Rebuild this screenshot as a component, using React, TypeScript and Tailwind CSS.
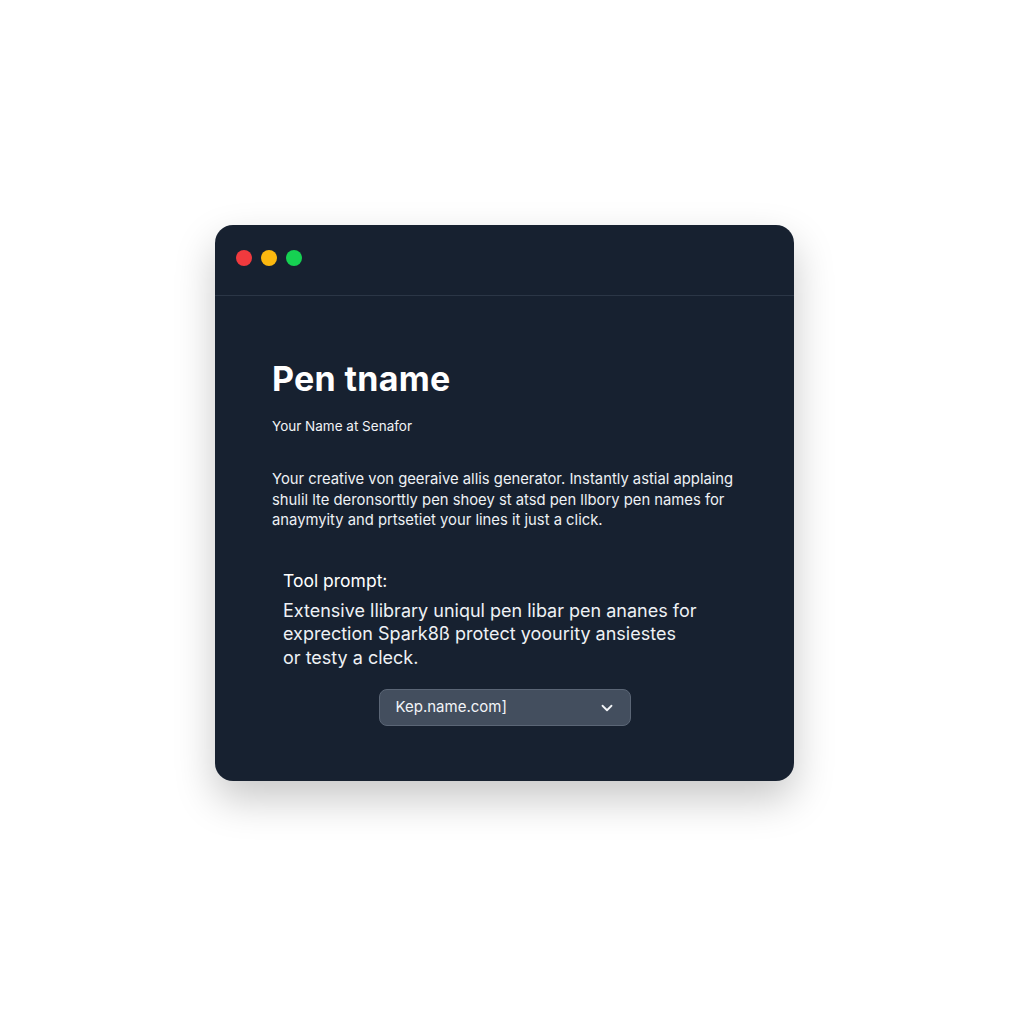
import React from "react";

const dots = ["bg-[#f03a3e]", "bg-[#fbb80f]", "bg-[#16d152]"];

export default function App() {
  return (
    <div
      className="h-[1024px] w-[1024px] bg-white pt-[225px] pl-[215px]"
      style={{ fontFamily: "Inter, 'Noto Sans', sans-serif" }}
    >
      <div className="w-[579px] h-[556px] rounded-[18px] bg-[#172130] shadow-[0_18px_40px_rgba(0,0,0,0.22)] flex flex-col overflow-hidden">
        {/* title bar */}
        <div className="h-[71px] border-b border-[#2b3646] flex gap-[9px] pt-[25px] pl-[21px]">
          {dots.map((c) => (
            <span key={c} className={`w-[16px] h-[16px] rounded-full ${c}`} />
          ))}
        </div>

        {/* body */}
        <div className="flex flex-col pl-[57px] pt-[63px] text-white">
          <h1 className="text-[34px] leading-[40px] font-bold tracking-[0.3px]">Pen tname</h1>
          <p className="mt-[17px] text-[13.5px] leading-[20px] text-[#f1f3f6]">Your Name at Senafor</p>
          <p className="mt-[33px] text-[14.8px] leading-[20.5px] text-[#eef1f5]">
            Your creative von geeraive allis generator. Instantly astial applaing
            <br />
            shulil lte deronsorttly pen shoey st atsd pen llbory pen names for
            <br />
            anaymyity and prtsetiet your lines it just a click.
          </p>

          <div className="pl-[11px] mt-[38px]">
            <p className="text-[17.5px] leading-[24px]">Tool prompt:</p>
            <p className="mt-[6px] text-[18px] leading-[23.5px] text-[#eef1f5]">
              Extensive llibrary uniqul pen libar pen ananes for
              <br />
              exprection Spark8ß protect yoourity ansiestes
              <br />
              or testy a cleck.
            </p>
          </div>
        </div>

        <div className="flex justify-center mt-[20px]">
          <div className="w-[252px] h-[37px] rounded-[8px] bg-[#434e5e] border border-[#5b6676] flex items-center justify-between pl-[16px] pr-[14px]">
            <span className="text-[15px] text-[#f2f4f7]">Kep.name.com]</span>
            <svg width="18" height="18" viewBox="0 0 24 24" fill="none" stroke="#f2f4f7" strokeWidth="2.4" strokeLinecap="round" strokeLinejoin="round">
              <path d="M6 9l6 6 6-6" />
            </svg>
          </div>
        </div>
      </div>
    </div>
  );
}
